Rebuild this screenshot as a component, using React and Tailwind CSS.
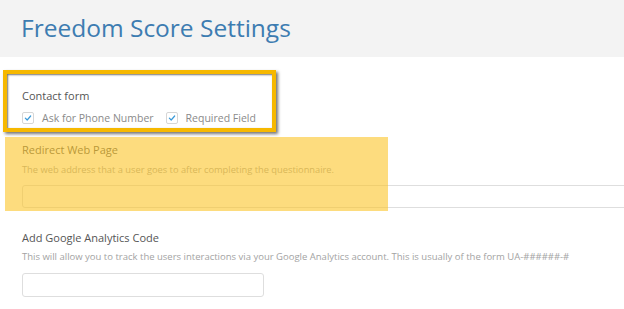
import React from 'react';

function Check({ label }) {
  return (
    <label className="flex items-center gap-[8px]">
      <span className="w-[12px] h-[12px] rounded-[2px] border border-[#d6d6d6] bg-white flex items-center justify-center">
        <svg viewBox="0 0 12 12" className="w-[8px] h-[8px]">
          <path d="M2 6.2 L4.8 9 L10 3" fill="none" stroke="#3a9ad9" strokeWidth="1.8" strokeLinecap="round" strokeLinejoin="round" />
        </svg>
      </span>
      <span>{label}</span>
    </label>
  );
}

export default function App() {
  return (
    <div className="relative w-[624px] h-[309px] overflow-hidden bg-white font-['Open_Sans',sans-serif]">
      <div className="h-[57px] bg-[#f3f3f3] flex items-center pl-[21px]">
        <h1 className="text-[24.5px] text-[#3d7cb1] leading-none">Freedom Score Settings</h1>
      </div>

      <div className="pl-[22px]">
        <div className="pt-[30px] text-[11px] leading-[18px] text-[#555]">Contact form</div>
        <div className="mt-[5px] flex gap-[12px] text-[10.5px] leading-[16px] text-[#8a8a8a]">
          <Check label="Ask for Phone Number" />
          <Check label="Required Field" />
        </div>

        <div className="mt-[15px] text-[11px] leading-[18px] text-[#555]">Redirect Web Page</div>
        <div className="mt-[4px] text-[9.3px] leading-[14px] text-[#a3a3a3]">
          The web address that a user goes to after completing the questionnaire.
        </div>
        <div className="mt-[8px] h-[23px] w-[620px] rounded-[3px] border border-[#dedede] bg-white" />

        <div className="mt-[21px] text-[11px] leading-[18px] text-[#555]">Add Google Analytics Code</div>
        <div className="mt-[3px] text-[9.5px] leading-[14px] text-[#a3a3a3]">
          This will allow you to track the users interactions via your Google Analytics account. This is usually of the form UA-######-#
        </div>
        <div className="mt-[9px] h-[24px] w-[242px] rounded-[3px] border border-[#dedede] bg-white" />
      </div>

      {/* annotations */}
      <div className="absolute left-[3px] top-[70px] w-[273px] h-[62px] border-4 border-[#f6b800] shadow-[2px_2px_3px_rgba(0,0,0,0.55),inset_1px_1px_2px_rgba(0,0,0,0.55)]" />
      <div className="absolute left-[5px] top-[137px] w-[383px] h-[74px] bg-[rgba(252,196,40,0.6)]" />
    </div>
  );
}
